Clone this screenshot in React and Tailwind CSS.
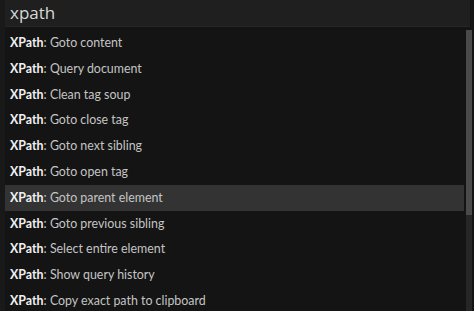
import React from "react";

const items = [
  "Goto content",
  "Query document",
  "Clean tag soup",
  "Goto close tag",
  "Goto next sibling",
  "Goto open tag",
  "Goto parent element",
  "Goto previous sibling",
  "Select entire element",
  "Show query history",
  "Copy exact path to clipboard",
];

export default function App() {
  return (
    <div
      className="w-[474px] h-[311px] overflow-hidden bg-[#141414] flex"
      style={{ fontFamily: '"Open Sans", "Noto Sans", sans-serif' }}
    >
      <div className="w-[5px] shrink-0 bg-[#191919]" />
      <div className="flex-1 flex flex-col min-w-0">
        <div className="h-[27px] shrink-0 bg-[#1f1f1f] border-b border-[#262626] mr-[4px] flex items-center pl-[5px]">
          <span className="text-[17px] leading-none text-[#d8d8d8] -mt-[1px]">xpath</span>
        </div>
        <div className="flex-1 flex min-h-0 pt-[3px]">
          <div className="flex-1 flex flex-col">
            {items.map((t, i) => (
              <div
                key={t}
                className={
                  "h-[25.8px] shrink-0 flex items-center pl-[5px] pt-[1px] text-[12.4px] " +
                  (i === 6 ? "bg-[#333333] mr-[2px]" : "")
                }
                style={{ fontFamily: 'Lato, "Noto Sans", sans-serif' }}
              >
                <span className="font-bold text-[#f0f0f0]">XPath</span>
                <span className="text-[#c4c4c4]">: {t}</span>
              </div>
            ))}
          </div>
          <div className="w-[6px] shrink-0 flex flex-col bg-[#262626] mr-[2px]">
            <div className="h-[185px] bg-[#4a4a4a]" />
          </div>
        </div>
      </div>
    </div>
  );
}
